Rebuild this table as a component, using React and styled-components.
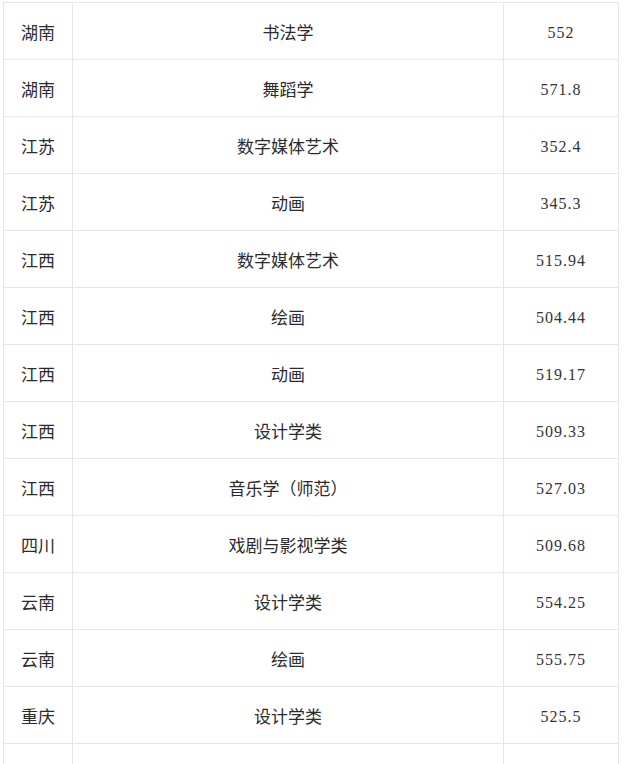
import React from "react";
import styled, { createGlobalStyle } from "styled-components";

const Global = createGlobalStyle`
  html, body { margin: 0; padding: 0; background: #fff; overflow: hidden; }
`;

const Wrap = styled.div`
  padding: 2px 0 0 3px;
  width: 624px;
  height: 764px;
  box-sizing: border-box;
  overflow: hidden;
`;

const Table = styled.table`
  border-collapse: collapse;
  table-layout: fixed;
  width: 615px;
`;

const Col = styled.col`
  width: ${(p) => p.$w}px;
`;

const Cell = styled.td`
  border: 1px solid #e6e6e6;
  height: 56px;
  padding: 0;
  text-align: center;
  vertical-align: middle;
  color: #2b2b2b;
  font-family: "Noto Sans CJK SC", sans-serif;
  font-size: 17px;
  line-height: 1;
`;

const NumCell = styled(Cell)`
  height: 53px;
  padding: 3px 0 0;
  font-family: "Liberation Serif", "DejaVu Serif", serif;
  font-size: 16px;
  letter-spacing: 1px;
  color: #333;
`;

const rows = [
  ["湖南", "书法学", "552"],
  ["湖南", "舞蹈学", "571.8"],
  ["江苏", "数字媒体艺术", "352.4"],
  ["江苏", "动画", "345.3"],
  ["江西", "数字媒体艺术", "515.94"],
  ["江西", "绘画", "504.44"],
  ["江西", "动画", "519.17"],
  ["江西", "设计学类", "509.33"],
  ["江西", "音乐学（师范）", "527.03"],
  ["四川", "戏剧与影视学类", "509.68"],
  ["云南", "设计学类", "554.25"],
  ["云南", "绘画", "555.75"],
  ["重庆", "设计学类", "525.5"],
  ["重庆", "戏剧与影视学类", "530.26"],
];

export default function App() {
  return (
    <>
      <Global />
      <Wrap>
        <Table>
          <colgroup>
            <Col $w={69} />
            <Col $w={431} />
            <Col $w={115} />
          </colgroup>
          <tbody>
            {rows.map((r, i) => (
              <tr key={i}>
                <Cell>{r[0]}</Cell>
                <Cell>{r[1]}</Cell>
                <NumCell>{r[2]}</NumCell>
              </tr>
            ))}
          </tbody>
        </Table>
      </Wrap>
    </>
  );
}
